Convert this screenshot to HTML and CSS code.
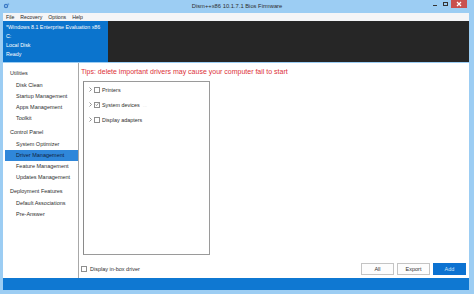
FILE: index.html
```html
<!DOCTYPE html>
<html lang="en">
<head>
<meta charset="utf-8">
<title>Dism++</title>
<link rel="stylesheet" href="styles.css">
</head>
<body>
<div class="window">
  <div class="titlebar">
    <div class="tb-left">
      <svg class="appicon" width="7" height="7" viewBox="0 0 7 7">
        <circle cx="3" cy="4" r="2.2" fill="#3a78c4"/>
        <circle cx="3" cy="4" r="0.9" fill="#a9d4f5"/>
        <path d="M5 0.5 L5.5 1.8 L6.8 2 L5.6 2.5 L5.3 3.8 L4.8 2.6 L3.6 2.3 L4.7 1.9 Z" fill="#4f8fd6"/>
      </svg>
    </div>
    <div class="title">Dism++x86 10.1.7.1 Bios Firmware</div>
    <div class="controls">
      <span class="ctl"><span class="min"></span></span>
      <span class="ctl"><span class="max"></span></span>
      <span class="ctl close">
        <svg width="6" height="6" viewBox="0 0 6 6"><path d="M1 1 L5 5 M5 1 L1 5" stroke="#fff" stroke-width="1.2"/></svg>
      </span>
    </div>
  </div>
  <div class="frame">
    <div class="menubar">
      <span>File</span><span>Recovery</span><span>Options</span><span>Help</span>
    </div>
    <div class="header">
      <div class="sysinfo">
        <div>*Windows 8.1 Enterprise Evaluation x86</div>
        <div>C:</div>
        <div>Local Disk</div>
        <div>Ready</div>
      </div>
      <div class="console"></div>
    </div>
    <div class="main">
      <nav class="sidebar">
        <div class="group">
          <div class="heading">Utilities</div>
          <div class="item">Disk Clean</div>
          <div class="item">Startup Management</div>
          <div class="item">Apps Management</div>
          <div class="item">Toolkit</div>
        </div>
        <div class="group">
          <div class="heading">Control Panel</div>
          <div class="item">System Optimizer</div>
          <div class="item selected">Driver Management</div>
          <div class="item">Feature Management</div>
          <div class="item">Updates Management</div>
        </div>
        <div class="group">
          <div class="heading">Deployment Features</div>
          <div class="item">Default Associations</div>
          <div class="item">Pre-Answer</div>
        </div>
      </nav>
      <section class="content">
        <div class="tips">Tips: delete important drivers may cause your computer fail to start</div>
        <div class="tree">
          <div class="node">
            <svg class="arrow" width="3" height="5" viewBox="0 0 3 5"><path d="M0.5 0.5 L2.5 2.5 L0.5 4.5" fill="none" stroke="#777" stroke-width="0.8"/></svg>
            <span class="cb"></span>
            <span class="label">Printers</span>
          </div>
          <div class="node">
            <svg class="arrow" width="3" height="5" viewBox="0 0 3 5"><path d="M0.5 0.5 L2.5 2.5 L0.5 4.5" fill="none" stroke="#777" stroke-width="0.8"/></svg>
            <span class="cb">
              <svg width="5" height="5" viewBox="0 0 5 5"><path d="M0.8 2.6 L2 3.8 L4.3 1" fill="none" stroke="#666" stroke-width="0.8"/></svg>
            </span>
            <span class="label">System devices</span>
            <span class="smudge">...</span>
          </div>
          <div class="node">
            <svg class="arrow" width="3" height="5" viewBox="0 0 3 5"><path d="M0.5 0.5 L2.5 2.5 L0.5 4.5" fill="none" stroke="#777" stroke-width="0.8"/></svg>
            <span class="cb"></span>
            <span class="label">Display adapters</span>
          </div>
        </div>
        <div class="bottom">
          <label class="inbox"><span class="cb big"></span><span>Display in-box driver</span></label>
          <div class="buttons">
            <button class="btn">All</button>
            <button class="btn">Export</button>
            <button class="btn primary">Add</button>
          </div>
        </div>
      </section>
    </div>
    <div class="statusbar"></div>
  </div>
</div>
</body>
</html>
```

FILE: styles.css
```css
* { box-sizing: border-box; }
html, body {
  margin: 0;
  padding: 0;
  width: 474px;
  height: 294px;
  overflow: hidden;
  background: #9ccdf3;
  font-family: "Liberation Sans", Arial, sans-serif;
  color: #333;
}
.window {
  width: 474px;
  height: 294px;
  display: flex;
  flex-direction: column;
}
.titlebar {
  height: 13px;
  display: grid;
  grid-template-columns: 1fr auto 1fr;
  align-items: start;
}
.tb-left {
  padding: 2px 0 0 3px;
  display: flex;
}
.title {
  font-size: 5.8px;
  line-height: 12px;
  color: #2e2e2e;
}
.controls {
  justify-self: end;
  display: flex;
  margin-right: 7px;
}
.ctl {
  width: 11px;
  height: 8px;
  display: flex;
  align-items: center;
  justify-content: center;
}
.ctl.close {
  width: 16px;
  background: #c9504e;
}
.min {
  width: 4px;
  height: 1px;
  background: #333;
  margin-top: 3px;
}
.max {
  width: 5px;
  height: 4px;
  border: 1px solid #333;
  border-top-width: 1.5px;
}
.frame {
  flex: 1;
  display: flex;
  flex-direction: column;
  padding: 0 5px 4px 3px;
}
.menubar {
  height: 8px;
  background: #f4f5f7;
  display: flex;
  gap: 6px;
  padding-left: 3px;
  font-size: 5.2px;
  line-height: 8px;
  color: #1e1e1e;
}
.header {
  height: 41px;
  display: flex;
  margin-bottom: 1px;
}
.sysinfo {
  width: 105px;
  background: #0b74cd;
  color: #fff;
  padding: 2px 0 0 3px;
  font-size: 5.3px;
  line-height: 9px;
}
.console {
  flex: 1;
  background: #262626;
}
.main {
  height: 215px;
  display: flex;
  background: #fff;
}
.sidebar {
  width: 76px;
  border-right: 1px solid #a8a8a8;
  padding: 3px 0 0 2px;
  font-size: 5.5px;
  color: #2e2e2e;
}
.group + .group { margin-top: 1px; }
.heading {
  line-height: 14px;
  padding-left: 5px;
}
.item {
  line-height: 11px;
  height: 11px;
  padding-left: 11px;
}
.item.selected {
  background: #2f87da;
  color: #10233a;
}
.content {
  flex: 1;
  display: flex;
  flex-direction: column;
  padding: 4px 3px 3px 2px;
}
.tips {
  color: #dc3038;
  font-size: 7px;
  line-height: 10px;
}
.tree {
  margin: 4px 0 0 2px;
  width: 127px;
  height: 174px;
  border: 1px solid #9a9a9a;
  border-left-color: #8a8a8a;
}
.node {
  height: 15px;
  display: flex;
  align-items: center;
  padding-left: 5px;
  font-size: 5.4px;
  color: #2e2e2e;
}
.arrow { margin-right: 2px; }
.cb {
  width: 6px;
  height: 6px;
  border: 1px solid #8e8e8e;
  background: #fff;
  display: inline-flex;
  align-items: center;
  justify-content: center;
  margin-right: 2px;
}
.cb svg { display: block; }
.smudge {
  margin-left: 3px;
  color: #e4e4e4;
  font-size: 5px;
}
.bottom {
  margin-top: 8px;
  display: flex;
  align-items: center;
  justify-content: space-between;
}
.inbox {
  display: flex;
  align-items: center;
  font-size: 5.5px;
  color: #2e2e2e;
}
.cb.big { margin-right: 3px; }
.buttons {
  display: flex;
  gap: 3px;
}
.btn {
  width: 33px;
  height: 12px;
  padding: 0;
  margin: 0;
  border: 1px solid #c4c4c4;
  background: #fdfdfd;
  font-family: "Liberation Sans", Arial, sans-serif;
  font-size: 5.5px;
  color: #333;
}
.btn.primary {
  background: #0c72d1;
  border-color: #0c72d1;
  color: #cfe5fa;
}
.statusbar {
  height: 12px;
  background: #0f78d2;
}
```
